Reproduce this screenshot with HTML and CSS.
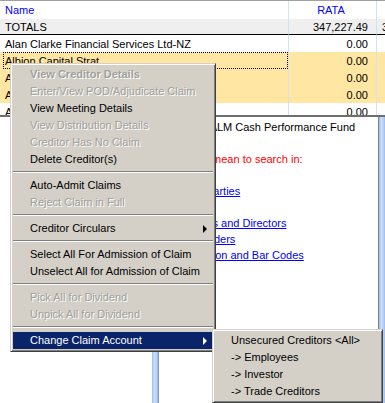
FILE: index.html
```html
<!DOCTYPE html>
<html lang="en">
<head>
  <meta charset="UTF-8">
  <title>Creditors</title>
  <link rel="stylesheet" href="styles.css">
</head>
<body>
  <div class="grid">
    <table class="creditors">
      <colgroup>
        <col class="col-name">
        <col class="col-rata">
        <col class="col-next">
      </colgroup>
      <tr class="head">
        <td>Name</td>
        <td class="center">RATA</td>
        <td></td>
      </tr>
      <tr class="totals">
        <td>TOTALS</td>
        <td class="num">347,227.49</td>
        <td class="num">347,227.49</td>
      </tr>
      <tr>
        <td>Alan Clarke Financial Services Ltd-NZ</td>
        <td class="num">0.00</td>
        <td class="num">0.00</td>
      </tr>
      <tr class="picked focus">
        <td>Albion Capital Strat</td>
        <td class="num">0.00</td>
        <td class="num">0.00</td>
      </tr>
      <tr class="picked">
        <td>Allied Investments Ltd</td>
        <td class="num">0.00</td>
        <td class="num">0.00</td>
      </tr>
      <tr class="picked">
        <td>AMP Capital Investors</td>
        <td class="num">0.00</td>
        <td class="num">0.00</td>
      </tr>
      <tr>
        <td>Anderson Trust</td>
        <td class="num">0.00</td>
        <td class="num">0.00</td>
      </tr>
    </table>
  </div>

  <div class="lower">
    <div class="tree"></div>
    <div class="splitter"></div>
    <div class="search">
      <p>Creditor: ALM Cash Performance Fund</p>
      <p>&nbsp;</p>
      <p class="warn">Area you mean to search in:</p>
      <p>&nbsp;</p>
      <p><a href="#">Related Parties</a></p>
      <p>&nbsp;</p>
      <p><a href="#">All Officers and Directors</a></p>
      <p><a href="#">Share Holders</a></p>
      <p><a href="#">File Location and Bar Codes</a></p>
    </div>
    <div class="splitter right"></div>
  </div>

  <div class="menu main-menu">
    <div class="item off bold">View Creditor Details</div>
    <div class="item off">Enter/View POD/Adjudicate Claim</div>
    <div class="item">View Meeting Details</div>
    <div class="item off">View Distribution Details</div>
    <div class="item off">Creditor Has No Claim</div>
    <div class="item">Delete Creditor(s)</div>
    <div class="sep"></div>
    <div class="item">Auto-Admit Claims</div>
    <div class="item off">Reject Claim in Full</div>
    <div class="sep"></div>
    <div class="item sub">Creditor Circulars</div>
    <div class="sep"></div>
    <div class="item">Select All For Admission of Claim</div>
    <div class="item">Unselect All for Admission of Claim</div>
    <div class="sep"></div>
    <div class="item off">Pick All for Dividend</div>
    <div class="item off">Unpick All for Dividend</div>
    <div class="sep"></div>
    <div class="item sub active">Change Claim Account</div>
  </div>

  <div class="menu sub-menu">
    <div class="item">Unsecured Creditors &lt;All&gt;</div>
    <div class="item">-&gt; Employees</div>
    <div class="item">-&gt; Investor</div>
    <div class="item">-&gt; Trade Creditors</div>
  </div>
</body>
</html>
```

FILE: styles.css
```css
* {
  box-sizing: border-box;
}

html, body {
  width: 385px;
  height: 403px;
}

body {
  margin: 0;
  overflow: hidden;
  position: relative;
  background: #fff;
  font-family: "Liberation Sans", Arial, sans-serif;
  font-size: 11px;
  color: #000;
}

/* grid */

.grid {
  height: 115px;
  overflow: hidden;
  border-top: 1px solid #a0a0a0;
}

.creditors {
  table-layout: fixed;
  width: 443px;
  border-collapse: separate;
  border-spacing: 0;
}

.col-name { width: 289px; }
.col-rata { width: 88px; }
.col-next { width: 66px; }

.creditors td {
  height: 17px;
  padding: 0 8px 0 5px;
  border-right: 1px solid #d3e1f5;
  white-space: nowrap;
  overflow: hidden;
}

.creditors .num {
  text-align: right;
}

.creditors .center {
  text-align: center;
}

.head td {
  height: 18px;
  color: #0000ff;
}

.totals td {
  height: 16px;
  background: #efefef;
  border-bottom: 1px solid #000;
}

.picked td {
  background: #ffe6a2;
}

.focus td:first-child {
  position: relative;
}

.focus td:first-child::after {
  content: "";
  position: absolute;
  top: 0;
  left: 3px;
  right: 0;
  bottom: 0;
  outline: 1px dotted #000;
  outline-offset: -1px;
}

/* lower panes */

.lower {
  display: flex;
  height: 288px;
  border-top: 2px solid #6e6e6e;
}

.tree {
  width: 152px;
  background: #fff;
}

.splitter {
  width: 7px;
  background: linear-gradient(to right, #9cbdee, #cfe0f8 45%, #9cbdee);
  border-right: 1px solid #7f9db9;
}

.splitter.right {
  width: 7px;
  border-right: none;
  border-left: 1px solid #808080;
}

.search {
  flex: 1;
  padding: 2px 0 0 6px;
  background: #fff;
  overflow: hidden;
}

.search p {
  margin: 0;
  height: 16px;
  line-height: 16px;
  white-space: nowrap;
}

.search .warn {
  color: #ff0000;
}

.search a {
  color: #0000ff;
}

/* popup menus */

.menu {
  position: absolute;
  background: #d4d0c8;
  border: 1px solid;
  border-color: #d4d0c8 #404040 #404040 #d4d0c8;
  box-shadow: inset 1px 1px #fff, inset -1px -1px #808080;
  padding: 2px;
}

.main-menu {
  left: 10px;
  top: 63px;
  width: 206px;
}

.sub-menu {
  left: 212px;
  top: 329px;
  width: 171px;
}

.item {
  position: relative;
  height: 17px;
  line-height: 17px;
  padding-left: 17px;
  white-space: nowrap;
}

.sub-menu .item {
  padding-left: 16px;
}

.item.off {
  color: #a09f9b;
  text-shadow: 1px 1px 0 #fff;
}

.item.bold {
  font-weight: bold;
}

.item.sub::after {
  content: "";
  position: absolute;
  right: 6px;
  top: 5px;
  border-left: 4px solid #000;
  border-top: 4px solid transparent;
  border-bottom: 4px solid transparent;
}

.item.active {
  background: #0a246a;
  color: #fff;
}

.item.active::after {
  border-left-color: #fff;
}

.sep {
  height: 9px;
  padding-top: 3px;
}

.sep::before {
  content: "";
  display: block;
  border-top: 1px solid #808080;
  border-bottom: 1px solid #fff;
}
```
